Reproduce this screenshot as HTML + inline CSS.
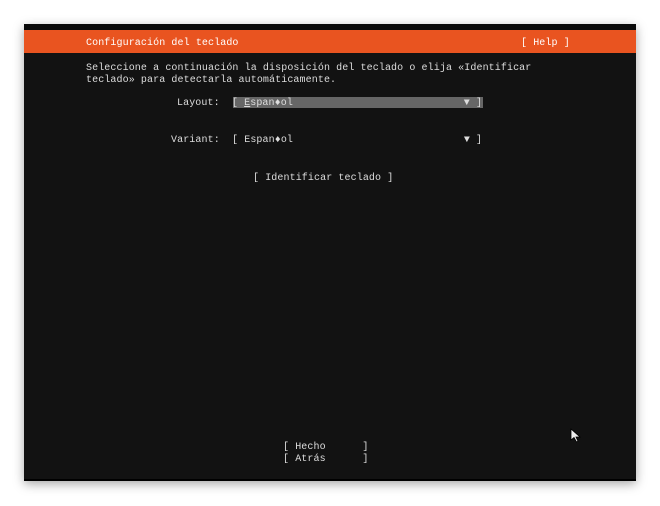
<!DOCTYPE html>
<html><head><style>
body{margin:0;width:660px;height:506px;background:#fff;position:relative;overflow:hidden;font-family:"Liberation Mono","DejaVu Sans Mono",monospace;font-size:10px;color:#ddd}
#win{position:absolute;left:24px;top:24px;width:612px;height:457px;background:#121212;box-shadow:0 3px 10px rgba(0,0,0,.35);border-bottom:2px solid #000;border-top:6px solid #0a0a0a;box-sizing:border-box}
#hdr{position:absolute;left:0;top:0;width:100%;height:23px;background:#e95420;color:#fff}
.t{position:absolute;white-space:pre;line-height:12px;letter-spacing:0.1px}
#sel{position:absolute;left:209px;top:67px;width:250px;height:11px;background:#666}
</style></head><body>
<div id="win">
<div id="hdr"><span class="t" style="left:62px;top:8px">Configuración del teclado</span><span class="t" style="left:497px;top:8px">[ Help ]</span></div>
<div class="t" style="left:62px;top:33px">Seleccione a continuación la disposición del teclado o elija «Identificar
teclado» para detectarla automáticamente.</div>
<div id="sel"></div>
<div class="t" style="left:153px;top:68px">Layout:  [ <u>E</u>span♦ol                            ▼ ]</div>
<div class="t" style="left:147px;top:105px">Variant:  [ Espan♦ol                            ▼ ]</div>
<div class="t" style="left:229px;top:143px">[ Identificar teclado ]</div>
<div class="t" style="left:259px;top:412px">[ Hecho      ]
[ Atrás      ]</div>
<svg style="position:absolute;left:546px;top:398px" width="12" height="16" viewBox="0 0 12 16"><path d="M1 1 L1 12 L4 9.5 L6.5 14 L8 13.2 L6 9 L10 9 Z" fill="#eee" stroke="#000" stroke-width="0.8"/></svg>
</div>
</body></html>
